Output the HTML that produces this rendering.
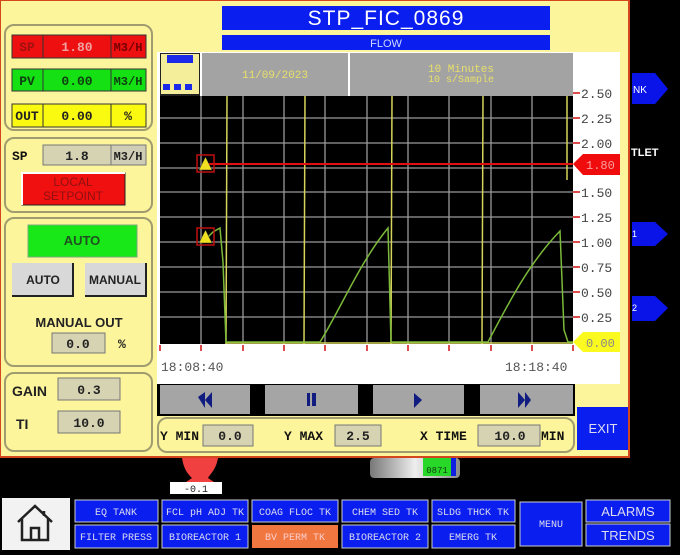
<!DOCTYPE html>
<html><head><meta charset="utf-8"><style>
html,body{margin:0;padding:0;background:#000;width:680px;height:555px;overflow:hidden}
svg{display:block}
text{font-family:"Liberation Mono",monospace}
.s{font-family:"Liberation Sans",sans-serif}
</style></head><body>
<svg width="680" height="555" viewBox="0 0 680 555" xmlns="http://www.w3.org/2000/svg">
<rect width="680" height="555" fill="#000"/>
<g fill="#0a14e8">
<path d="M632,73 H655 L668,89 L655,104 H632 Z"/>
<path d="M632,222 H655 L668,234 L655,246 H632 Z"/>
<path d="M632,296 H655 L668,308 L655,321 H632 Z"/>
</g>
<text x="633" y="93" fill="#fff" font-size="10" class="s">NK</text>
<text x="631" y="156" fill="#fff" font-size="11" class="s" font-weight="bold">TLET</text>
<text x="632" y="237" fill="#fff" font-size="9" class="s">1</text>
<text x="632" y="311" fill="#fff" font-size="9" class="s">2</text>
<rect x="0" y="0" width="629" height="457" fill="#fdf59c" stroke="#d4461e" stroke-width="2"/>
<rect x="222" y="6" width="328" height="24" fill="#0a1ef0"/>
<text x="386" y="25" fill="#fff" font-size="21" text-anchor="middle" class="s" letter-spacing="1">STP_FIC_0869</text>
<rect x="222" y="35" width="328" height="15" fill="#0a1ef0"/>
<text x="386" y="47" fill="#cfd8ff" font-size="11" text-anchor="middle" class="s">FLOW</text>
<rect x="157" y="52" width="463" height="332" fill="#fff"/>
<rect x="160" y="53" width="40" height="43" fill="#222"/>
<rect x="161" y="54" width="38" height="40" fill="#f4ee9a"/>
<rect x="167" y="55" width="26" height="8" fill="#1a2ae8"/>
<rect x="163" y="84" width="7" height="6" fill="#1a2ae8"/><rect x="174" y="84" width="7" height="6" fill="#1a2ae8"/><rect x="185" y="84" width="7" height="6" fill="#1a2ae8"/>
<rect x="202" y="53" width="146" height="43" fill="#a3a3a3"/>
<rect x="350" y="53" width="223" height="43" fill="#a3a3a3"/>
<text x="275" y="78" fill="#e8e06a" font-size="11" text-anchor="middle">11/09/2023</text>
<text x="461" y="72" fill="#e8e06a" font-size="11" text-anchor="middle">10 Minutes</text>
<text x="461" y="82" fill="#e8e06a" font-size="10" text-anchor="middle">10 s/Sample</text>
<rect x="160" y="96" width="413" height="248" fill="#000"/>
<g stroke="#9a9a9a" stroke-width="1.3">
<line x1="201" y1="96" x2="201" y2="344"/><line x1="243" y1="96" x2="243" y2="344"/><line x1="284" y1="96" x2="284" y2="344"/><line x1="325" y1="96" x2="325" y2="344"/><line x1="367" y1="96" x2="367" y2="344"/><line x1="408" y1="96" x2="408" y2="344"/><line x1="449" y1="96" x2="449" y2="344"/><line x1="491" y1="96" x2="491" y2="344"/><line x1="532" y1="96" x2="532" y2="344"/>
<line x1="160" y1="118" x2="573" y2="118"/><line x1="160" y1="143" x2="573" y2="143"/><line x1="160" y1="168" x2="573" y2="168"/><line x1="160" y1="192" x2="573" y2="192"/><line x1="160" y1="217" x2="573" y2="217"/><line x1="160" y1="242" x2="573" y2="242"/><line x1="160" y1="267" x2="573" y2="267"/><line x1="160" y1="292" x2="573" y2="292"/><line x1="160" y1="317" x2="573" y2="317"/>
</g>
<g stroke="#d6d45a" stroke-width="1.5">
<line x1="227" y1="96" x2="226" y2="344"/><line x1="305" y1="96" x2="304" y2="344"/><line x1="392" y1="96" x2="391" y2="344"/><line x1="483" y1="96" x2="482" y2="344"/><line x1="567" y1="96" x2="567" y2="180"/>
<line x1="226" y1="343" x2="573" y2="343"/>
</g>
<line x1="205" y1="164" x2="573" y2="164" stroke="#e01010" stroke-width="2"/>
<path d="M205,240 L213,232 L220,228 L223,262 L226,342 L320,342 C340,310 360,262 388,228 L391,342 L488,342 C510,300 530,262 560,231 L564,330 L568,342 L573,342" fill="none" stroke="#7cba3a" stroke-width="1.5"/>
<g>
<rect x="197" y="155" width="17" height="17" fill="none" stroke="#c01010" stroke-width="1.5"/>
<path d="M205.5,157 L212,170 H199 Z" fill="#f0e020" stroke="#333" stroke-width=".5"/>
<rect x="197" y="228" width="17" height="17" fill="none" stroke="#c01010" stroke-width="1.5"/>
<path d="M205.5,230 L212,243 H199 Z" fill="#f0e020" stroke="#333" stroke-width=".5"/>
</g>
<g stroke="#d01010" stroke-width="1.5">
<line x1="160" y1="345" x2="160" y2="351"/><line x1="201" y1="345" x2="201" y2="351"/><line x1="243" y1="345" x2="243" y2="351"/><line x1="284" y1="345" x2="284" y2="351"/><line x1="325" y1="345" x2="325" y2="351"/><line x1="367" y1="345" x2="367" y2="351"/><line x1="408" y1="345" x2="408" y2="351"/><line x1="449" y1="345" x2="449" y2="351"/><line x1="491" y1="345" x2="491" y2="351"/><line x1="532" y1="345" x2="532" y2="351"/><line x1="573" y1="345" x2="573" y2="351"/>
<line x1="573" y1="93" x2="580" y2="93"/><line x1="573" y1="118" x2="580" y2="118"/><line x1="573" y1="143" x2="580" y2="143"/><line x1="573" y1="192" x2="580" y2="192"/><line x1="573" y1="217" x2="580" y2="217"/><line x1="573" y1="242" x2="580" y2="242"/><line x1="573" y1="267" x2="580" y2="267"/><line x1="573" y1="292" x2="580" y2="292"/><line x1="573" y1="317" x2="580" y2="317"/>
</g>
<g fill="#444" font-size="13">
<text x="581" y="98">2.50</text><text x="581" y="123">2.25</text><text x="581" y="148">2.00</text><text x="581" y="197">1.50</text><text x="581" y="222">1.25</text><text x="581" y="247">1.00</text><text x="581" y="272">0.75</text><text x="581" y="297">0.50</text><text x="581" y="322">0.25</text>
</g>
<path d="M573,164 L583,154 H622 V175 H583 Z" fill="#f00c0c"/>
<text x="586" y="169" fill="#f6a0a0" font-size="12">1.80</text>
<path d="M573,342 L583,332 H622 V352 H583 Z" fill="#fafa20"/>
<text x="586" y="347" fill="#888" font-size="12">0.00</text>
<text x="161" y="371" fill="#555" font-size="13">18:08:40</text>
<text x="505" y="371" fill="#555" font-size="13">18:18:40</text>
<rect x="620" y="52" width="8" height="355" fill="#fdf59c"/>
<rect x="157" y="384" width="418" height="32" fill="#000"/>
<g fill="#a5a5a5"><rect x="160" y="385" width="90" height="29"/><rect x="265" y="385" width="93" height="29"/><rect x="373" y="385" width="91" height="29"/><rect x="480" y="385" width="93" height="29"/></g>
<g fill="#101c80">
<path d="M198,397 L205,392 V408 Z M205,400 L212,392 V408 Z"/>
<rect x="307" y="393" width="3" height="13"/><rect x="312" y="393" width="4" height="13"/>
<path d="M414,393 L422,400 L414,408 Z"/>
<path d="M518,392 L525,400 L518,408 Z M525,392 L531,400 L525,408 Z"/>
</g>
<rect x="577" y="407" width="51" height="43" fill="#0a1ef0"/>
<text x="603" y="433" fill="#dde" font-size="13" text-anchor="middle" class="s">EXIT</text>
<rect x="158" y="418" width="416" height="34" rx="9" fill="#fdf59c" stroke="#a09c70" stroke-width="2"/>
<g font-size="13" fill="#111" font-weight="bold">
<text x="160" y="440">Y MIN</text><text x="284" y="440">Y MAX</text><text x="420" y="440">X TIME</text><text x="541" y="440">MIN</text>
</g>
<g fill="#d6d3b2" stroke="#777" stroke-width="1">
<rect x="203" y="425" width="50" height="21"/><rect x="335" y="425" width="46" height="21"/><rect x="478" y="425" width="62" height="21"/>
</g>
<g font-size="13" fill="#222" font-weight="bold" text-anchor="middle"><text x="230" y="440">0.0</text><text x="358" y="440">2.5</text><text x="510" y="440">10.0</text></g>
<g fill="#fdf59c" stroke="#a09c70" stroke-width="2">
<rect x="5" y="25" width="147" height="105" rx="9"/>
<rect x="5" y="138" width="147" height="74" rx="9"/>
<rect x="5" y="218" width="147" height="148" rx="9"/>
<rect x="5" y="373" width="147" height="78" rx="9"/>
</g>
<g stroke="#333" stroke-width="1">
<rect x="12" y="35" width="134" height="23" fill="#ee1010"/><line x1="43" y1="35" x2="43" y2="58"/><line x1="111" y1="35" x2="111" y2="58"/>
<rect x="12" y="69" width="134" height="22" fill="#14e014"/><line x1="43" y1="69" x2="43" y2="91"/><line x1="111" y1="69" x2="111" y2="91"/>
<rect x="12" y="104" width="134" height="23" fill="#fafa10"/><line x1="43" y1="104" x2="43" y2="127"/><line x1="111" y1="104" x2="111" y2="127"/>
</g>
<g font-size="13" font-weight="bold">
<text x="27" y="51" fill="#a01010" text-anchor="middle">SP</text><text x="77" y="51" fill="#f0a0a0" text-anchor="middle">1.80</text><text x="128" y="51" fill="#700" text-anchor="middle" font-size="12">M3/H</text>
<text x="27" y="85" fill="#104010" text-anchor="middle">PV</text><text x="77" y="85" fill="#104010" text-anchor="middle">0.00</text><text x="128" y="85" fill="#104010" text-anchor="middle" font-size="12">M3/H</text>
<text x="27" y="120" fill="#222" text-anchor="middle">OUT</text><text x="77" y="120" fill="#222" text-anchor="middle">0.00</text><text x="128" y="120" fill="#222" text-anchor="middle">%</text>
<text x="12" y="160" fill="#111">SP</text>
</g>
<rect x="43" y="145" width="68" height="20" fill="#d6d3b2" stroke="#777"/>
<rect x="111" y="145" width="35" height="20" fill="#cfcdb5" stroke="#777"/>
<text x="77" y="160" font-size="13" font-weight="bold" fill="#222" text-anchor="middle">1.8</text>
<text x="128" y="160" font-size="12" font-weight="bold" fill="#222" text-anchor="middle">M3/H</text>
<rect x="22" y="173" width="103" height="32" fill="#f01010" stroke="#222"/>
<path d="M22,205 V173 H125" fill="none" stroke="#fff" stroke-width="2"/>
<text x="73" y="186" fill="#901010" font-size="12" text-anchor="middle" class="s">LOCAL</text>
<text x="73" y="200" fill="#901010" font-size="12" text-anchor="middle" class="s">SETPOINT</text>
<rect x="28" y="225" width="109" height="32" fill="#18e818" stroke="#7a7" />
<text x="82" y="245" fill="#205020" font-size="13" font-weight="bold" text-anchor="middle" class="s">AUTO</text>
<rect x="12" y="263" width="61" height="33" fill="#d8d8d8"/><path d="M12,296 H73 V263" fill="none" stroke="#222" stroke-width="2"/>
<rect x="85" y="263" width="61" height="33" fill="#d8d8d8"/><path d="M85,296 H146 V263" fill="none" stroke="#222" stroke-width="2"/>
<text x="43" y="284" fill="#222" font-size="12" font-weight="bold" text-anchor="middle" class="s">AUTO</text>
<text x="115" y="284" fill="#222" font-size="12" font-weight="bold" text-anchor="middle" class="s">MANUAL</text>
<text x="79" y="327" fill="#222" font-size="13" font-weight="bold" text-anchor="middle" class="s">MANUAL OUT</text>
<rect x="52" y="333" width="53" height="20" fill="#d6d3b2" stroke="#777"/>
<text x="78" y="348" fill="#222" font-size="13" font-weight="bold" text-anchor="middle">0.0</text>
<text x="118" y="348" fill="#222" font-size="13" font-weight="bold">%</text>
<text x="12" y="396" fill="#222" font-size="14" font-weight="bold" class="s">GAIN</text>
<text x="16" y="429" fill="#222" font-size="14" font-weight="bold" class="s">TI</text>
<rect x="58" y="378" width="62" height="22" fill="#d6d3b2" stroke="#777"/>
<rect x="58" y="411" width="62" height="22" fill="#d6d3b2" stroke="#777"/>
<text x="89" y="394" fill="#222" font-size="13" font-weight="bold" text-anchor="middle">0.3</text>
<text x="89" y="427" fill="#222" font-size="13" font-weight="bold" text-anchor="middle">10.0</text>
<path d="M182,458 H218 C216,470 210,474 208,478 L214,482 H186 L192,478 C188,474 184,470 182,458 Z" fill="#f04040"/>
<rect x="170" y="482" width="52" height="12" fill="#fff"/>
<text x="196" y="492" fill="#222" font-size="10" text-anchor="middle">-0.1</text>
<defs><linearGradient id="g" x1="0" x2="1"><stop offset="0" stop-color="#777"/><stop offset=".5" stop-color="#eee"/><stop offset="1" stop-color="#888"/></linearGradient></defs>
<rect x="370" y="458" width="90" height="20" rx="4" fill="url(#g)"/>
<rect x="423" y="458" width="28" height="18" fill="#28d828"/>
<rect x="451" y="458" width="5" height="18" fill="#1020e0"/>
<text x="437" y="473" fill="#104010" font-size="9" text-anchor="middle">0871</text>
<rect x="0" y="497" width="680" height="58" fill="#000"/>
<rect x="2" y="498" width="68" height="52" fill="#f2f2f2"/>
<path d="M18,522 L35,506 L52,522 M22,519 V540 H48 V519 M31,540 V528 H39 V540 M44,511 V516" fill="none" stroke="#222" stroke-width="2.5"/>
<g fill="#0a1ef0" stroke="#ccc" stroke-width="1">
<rect x="75" y="500" width="83" height="22"/><rect x="162" y="500" width="86" height="22"/><rect x="252" y="500" width="86" height="22"/><rect x="342" y="500" width="86" height="22"/><rect x="432" y="500" width="83" height="22"/>
<rect x="75" y="525" width="83" height="23"/><rect x="162" y="525" width="86" height="23"/><rect x="342" y="525" width="86" height="23"/><rect x="432" y="525" width="83" height="23"/>
<rect x="520" y="502" width="62" height="44"/>
<rect x="586" y="500" width="84" height="22"/><rect x="586" y="524" width="84" height="22"/>
</g>
<rect x="252" y="525" width="86" height="23" fill="#f07840"/>
<g fill="#dde" font-size="10" text-anchor="middle">
<text x="116" y="515">EQ TANK</text><text x="205" y="515">FCL pH ADJ TK</text><text x="295" y="515">COAG FLOC TK</text><text x="385" y="515">CHEM SED TK</text><text x="473" y="515">SLDG THCK TK</text>
<text x="116" y="540">FILTER PRESS</text><text x="205" y="540">BIOREACTOR 1</text><text x="295" y="540" fill="#fcc">BV PERM TK</text><text x="385" y="540">BIOREACTOR 2</text><text x="473" y="540">EMERG TK</text>
<text x="551" y="527">MENU</text>
</g>
<text x="628" y="516" fill="#dde" font-size="13" text-anchor="middle" class="s">ALARMS</text>
<text x="628" y="540" fill="#dde" font-size="13" text-anchor="middle" class="s">TRENDS</text>
</svg>
</body></html>
